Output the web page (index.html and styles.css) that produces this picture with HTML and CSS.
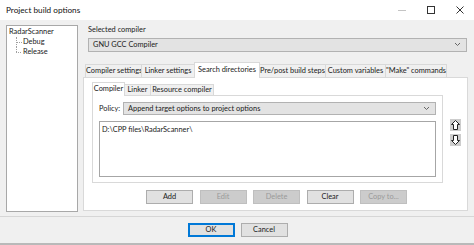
FILE: index.html
```html
<!DOCTYPE html>
<html>
<head>
<meta charset="utf-8">
<link rel="stylesheet" href="styles.css">
</head>
<body>
<div class="window">
  <div class="titlebar">
    <div class="title">Project build options</div>
    <div class="controls">
      <div class="ctl"><svg width="10" height="10" viewBox="0 0 10 10"><line x1="1" y1="5.5" x2="9" y2="5.5" stroke="#c4c4c4" stroke-width="1"/></svg></div>
      <div class="ctl"><svg width="10" height="10" viewBox="0 0 10 10"><rect x="1.5" y="1.5" width="7" height="7" fill="none" stroke="#333" stroke-width="1"/></svg></div>
      <div class="ctl"><svg width="10" height="10" viewBox="0 0 10 10"><path d="M1.5 1.5 L8.5 8.5 M8.5 1.5 L1.5 8.5" stroke="#333" stroke-width="1"/></svg></div>
    </div>
  </div>
  <div class="content">
    <div class="tree">
      <div class="node root">RadarScanner</div>
      <div class="children">
        <div class="node child">Debug</div>
        <div class="node child last">Release</div>
      </div>
    </div>
    <div class="main">
      <div class="sel-label">Selected compiler</div>
      <div class="combo wide">
        <span>GNU GCC Compiler</span>
        <svg class="chev" width="7" height="5" viewBox="0 0 7 5"><polyline points="1,1 3.5,3.5 6,1" fill="none" stroke="#666" stroke-width="1"/></svg>
      </div>
      <div class="tabs">
        <div class="tab" style="width:57px">Compiler settings</div>
        <div class="tab" style="width:54px">Linker settings</div>
        <div class="tab sel" style="width:66px">Search directories</div>
        <div class="tab" style="width:67px">Pre/post build steps</div>
        <div class="tab" style="width:61px">Custom variables</div>
        <div class="tab" style="width:62px">"Make" commands</div>
      </div>
      <div class="panel">
        <div class="panel-top">
          <div class="subwrap">
            <div class="subtabs">
              <div class="stab sel" style="width:33px">Compiler</div>
              <div class="stab" style="width:27px">Linker</div>
              <div class="stab" style="width:64px">Resource compiler</div>
            </div>
            <div class="subpanel">
              <div class="policy-row">
                <span class="policy-label">Policy:</span>
                <div class="combo policy">
                  <span>Append target options to project options</span>
                  <svg class="chev" width="7" height="5" viewBox="0 0 7 5"><polyline points="1,1 3.5,3.5 6,1" fill="none" stroke="#666" stroke-width="1"/></svg>
                </div>
              </div>
              <div class="list">
                <div class="item">D:\CPP files\RadarScanner\</div>
              </div>
            </div>
          </div>
          <div class="arrows">
            <div class="abtn"><svg width="11" height="12" viewBox="0 0 11 12"><polygon points="5.5,1.5 9.5,5.5 7.5,5.5 7.5,10.5 3.5,10.5 3.5,5.5 1.5,5.5" fill="#fff" stroke="#222" stroke-width="1"/></svg></div>
            <div class="abtn"><svg width="11" height="12" viewBox="0 0 11 12"><polygon points="5.5,10.5 9.5,6.5 7.5,6.5 7.5,1.5 3.5,1.5 3.5,6.5 1.5,6.5" fill="#fff" stroke="#222" stroke-width="1"/></svg></div>
          </div>
        </div>
        <div class="btn-row">
          <div class="btn">Add</div>
          <div class="btn dis">Edit</div>
          <div class="btn dis">Delete</div>
          <div class="btn">Clear</div>
          <div class="btn dis">Copy to...</div>
        </div>
      </div>
    </div>
  </div>
  <div class="footer">
    <div class="btn default">OK</div>
    <div class="btn">Cancel</div>
  </div>
</div>
</body>
</html>
```
FILE: styles.css
```css
* { box-sizing: border-box; }
html, body { margin: 0; padding: 0; }
body {
  width: 474px;
  height: 245px;
  overflow: hidden;
  font-family: Lato, "Liberation Sans", sans-serif;
  font-size: 7.4px;
  color: #1a1a1a;
  background: #f0f0f0;
}
.window {
  width: 474px;
  height: 245px;
  display: flex;
  flex-direction: column;
  background: #f0f0f0;
  border-bottom: 2px solid #b9b9b9;
}
.titlebar {
  height: 20px;
  flex: none;
  background: #fff;
  display: flex;
  align-items: center;
  padding-left: 6px;
}
.title { flex: 1; font-size: 8.2px; color: #111; }
.controls { display: flex; height: 20px; }
.ctl { width: 29px; display: flex; align-items: center; justify-content: center; }
.content {
  height: 197px;
  flex: none;
  display: flex;
  padding: 5px 6px 5px 6px;
  border-bottom: 1px solid #d6d6d6;
}
.tree {
  width: 72px;
  height: 187px;
  background: #fff;
  border: 1px solid #a8a8a8;
  padding: 1px 0 0 2px;
}
.node { height: 10px; line-height: 10px; white-space: nowrap; }
.children { margin-left: 7px; }
.child {
  position: relative;
  padding-left: 6px;
  border-left: 1px dotted #a0a0a0;
}
.child::before {
  content: "";
  position: absolute;
  left: 0;
  top: 5px;
  width: 5px;
  border-top: 1px dotted #a0a0a0;
}
.child.last { border-left: none; padding-left: 7px; }
.child.last::after {
  content: "";
  position: absolute;
  left: 0;
  top: 0;
  height: 5px;
  border-left: 1px dotted #a0a0a0;
}
.main {
  margin-left: 5px;
  width: 385px;
  display: flex;
  flex-direction: column;
}
.sel-label { height: 10px; line-height: 10px; margin-left: 5px; }
.combo {
  height: 14px;
  background: #e3e3e3;
  border: 1px solid #b2b2b2;
  display: flex;
  align-items: center;
  justify-content: space-between;
  padding: 0 5px 0 4px;
}
.combo.wide { margin: 3px 0 0 5px; width: 379px; }
.tabs {
  margin-top: 10px;
  margin-left: 2px;
  height: 15px;
  display: flex;
  align-items: flex-end;
}
.tab {
  height: 13px;
  line-height: 12px;
  text-align: center;
  white-space: nowrap;
  background: #f0f0f0;
  border: 1px solid #d9d9d9;
  border-bottom: none;
  margin-right: -1px;
}
.tab.sel {
  line-height: 13px;
  background: #fff;
  position: relative;
  z-index: 1;
  margin-bottom: -1px;
  height: 16px;
}
.panel {
  height: 135px;
  background: #fff;
  border: 1px solid #d9d9d9;
  padding: 4px 0 0 8px;
  display: flex;
  flex-direction: column;
}
.panel-top { display: flex; align-items: flex-start; }
.subwrap { width: 351px; display: flex; flex-direction: column; }
.subtabs { height: 13px; display: flex; align-items: flex-end; }
.stab {
  height: 11px;
  line-height: 10px;
  text-align: center;
  white-space: nowrap;
  background: #f0f0f0;
  border: 1px solid #d9d9d9;
  border-bottom: none;
  margin-right: -1px;
}
.stab.sel {
  height: 14px;
  line-height: 12px;
  background: #fff;
  position: relative;
  z-index: 1;
  margin-bottom: -1px;
}
.subpanel {
  height: 88px;
  border: 1px solid #d9d9d9;
  background: #fff;
  padding: 6px 6px 0 6px;
}
.policy-row { display: flex; align-items: center; height: 13px; }
.policy-label { width: 24px; }
.combo.policy { width: 313px; height: 13px; }
.list {
  margin-top: 6px;
  height: 56px;
  border: 1px solid #a6a6a6;
  padding: 3px 2px;
}
.item { line-height: 10px; }
.arrows {
  margin-left: 7px;
  margin-top: 37px;
  display: flex;
  flex-direction: column;
  gap: 3px;
}
.abtn {
  width: 11px;
  height: 12px;
  background: #cdcdcd;
  display: flex;
  align-items: center;
  justify-content: center;
}
.btn-row {
  display: flex;
  gap: 6.5px;
  margin: 7px 0 0 54px;
}
.btn {
  width: 47px;
  height: 14px;
  line-height: 12px;
  text-align: center;
  background: #e1e1e1;
  border: 1px solid #adadad;
}
.btn.dis {
  background: #cccccc;
  border-color: #bfbfbf;
  color: #9a9a9a;
}
.footer {
  flex: 1;
  display: flex;
  justify-content: center;
  gap: 6px;
  padding-top: 6px;
  padding-left: 1px;
}
.btn.default { border: 1px solid #0078d7; box-shadow: inset 0 0 0 1px #0078d7; }
```
